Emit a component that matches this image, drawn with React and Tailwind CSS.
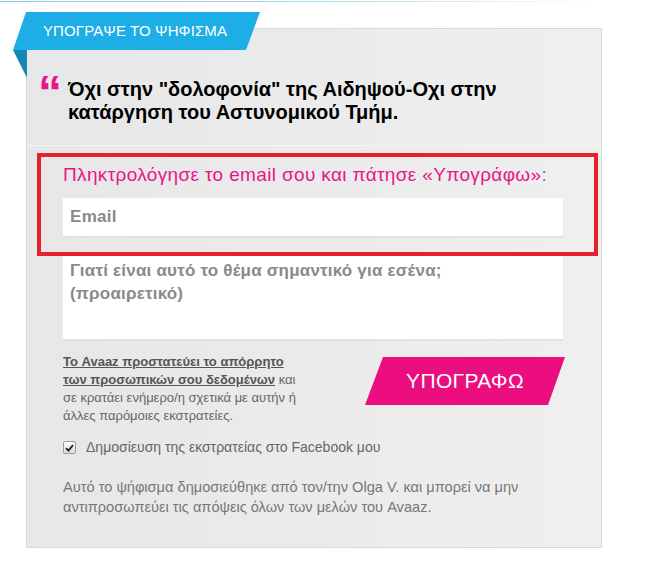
import React from "react";

// petition sign box
export default function App() {
  return (
    <div className="relative w-[653px] h-[564px] bg-white overflow-hidden font-['Liberation_Sans',Arial,sans-serif]">
      {/* thin top line */}
      <div className="h-px mt-px w-[600px] bg-gradient-to-r from-[#8fc9e1] via-[#a9d7ea] to-transparent" />

      <div className="relative ml-[26px] mt-[26px] w-[576px] h-[520px] border border-[#d8d8d8] bg-gradient-to-r from-[#e7e7e7] to-[#efefef]">
        {/* ribbon */}
        <div className="absolute -left-[14px] -top-[17px]">
          <svg width="248" height="67" viewBox="0 0 248 67">
            <polygon points="0,38 14,38 14,66" fill="#1487b8" />
            <polygon points="13,0 247,0 233,38 0,38" fill="#1eaee6" />
          </svg>
          <div className="absolute left-[30px] top-[11px] text-[15px] text-white tracking-[0.1px] leading-none">
            ΥΠΟΓΡΑΨΕ ΤΟ ΨΗΦΙΣΜΑ
          </div>
        </div>

        {/* title */}
        <div className="h-[117px] border-b border-[#f6f6f6] flex items-start pt-[49px] pl-[11px]">
          <span className="w-[30px] shrink-0 -mt-[9px] h-[48px] text-[#e8168b] text-[48px] font-bold leading-[48px]">
            “
          </span>
          <h1 className="text-[20px] font-bold text-black leading-[23px] w-[460px]">
            Όχι στην "δολοφονία" της Αιδηψού-Οχι στην κατάργηση του Αστυνομικού Τμήμ.
          </h1>
        </div>

        {/* email box */}
        <div className="mt-[7px] ml-[10px] w-[561px] border-[4px] border-[#e3222b] pt-[7px] pl-[22px] pb-[14px]">
          <div className="text-[19px] tracking-[0.35px] text-[#e8168b] leading-[22px]">
            Πληκτρολόγησε το email σου και πάτησε «Υπογράφω»<span className="text-[#777]">:</span>
          </div>
          <div className="mt-[12px] w-[500px] h-[40px] bg-white border-b-2 border-[#e2e2e2] flex items-center pl-[7px] text-[17px] tracking-[0.3px] font-bold text-[#8a8a8a]">
            Email
          </div>
        </div>

        <div className="ml-[36px] w-[500px] h-[85px] bg-white border-b-2 border-[#e2e2e2] pt-[3px] pl-[7px] text-[17px] tracking-[0.2px] font-bold text-[#8a8a8a] leading-[23px]">
          Γιατί είναι αυτό το θέμα σημαντικό για εσένα;
          <br />
          (προαιρετικό)
        </div>

        {/* privacy + button */}
        <div className="flex ml-[36px] mt-[12px]">
          <p className="w-[242px] shrink-0 text-[13px] leading-[18px] text-[#666]">
            <a className="font-bold underline text-[#555]">
              Το Avaaz προστατεύει το απόρρητο των προσωπικών σου δεδομένων
            </a>{" "}
            και σε κρατάει ενήμερο/η σχετικά με αυτήν ή άλλες παρόμοιες εκστρατείες.
          </p>
          <button className="relative ml-[60px] mt-[4px] w-[200px] h-[48px] shrink-0">
            <svg className="absolute inset-0" width="200" height="48" viewBox="0 0 200 48">
              <polygon points="18,0 200,0 183,48 0,48" fill="#ec0d7e" />
            </svg>
            <span className="relative text-white text-[21px] tracking-[0.3px]">ΥΠΟΓΡΑΦΩ</span>
          </button>
        </div>

        <label className="flex items-center ml-[36px] mt-[12px] text-[14px] text-[#666]">
          <span className="w-[13px] h-[13px] rounded-[2px] border border-[#9a9a9a] bg-gradient-to-b from-[#fdfdfd] to-[#dcdcdc] flex items-center justify-center">
            <svg width="9" height="8" viewBox="0 0 9 8">
              <path d="M1 4.2 L3.4 6.6 L8 1.2" fill="none" stroke="#222" strokeWidth="1.8" />
            </svg>
          </span>
          <span className="ml-[10px]">Δημοσίευση της εκστρατείας στο Facebook μου</span>
        </label>

        <p className="ml-[36px] mt-[19px] w-[520px] text-[14.6px] leading-[20px] text-[#777]">
          Αυτό το ψήφισμα δημοσιεύθηκε από τον/την Olga V. και μπορεί να μην
          <br />
          αντιπροσωπεύει τις απόψεις όλων των μελών του Avaaz.
        </p>
      </div>
    </div>
  );
}
